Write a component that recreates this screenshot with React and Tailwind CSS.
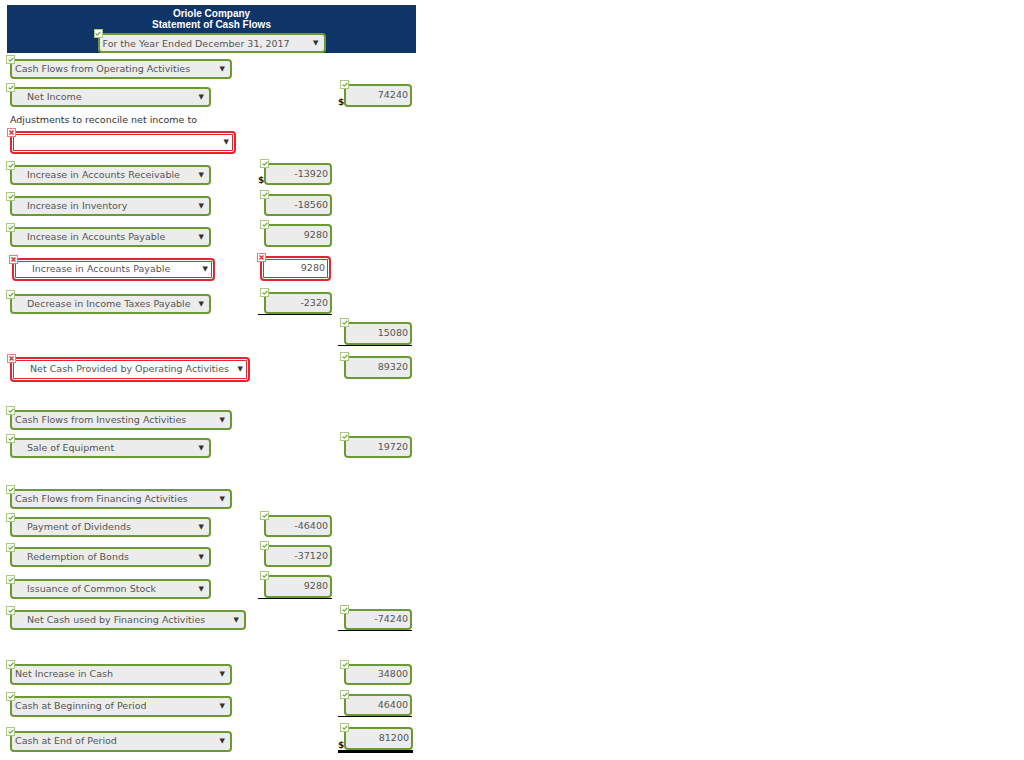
import React from "react";

function Badge({ red, cls = "-left-[6px] -top-[6px]" }) {
  return (
    <span
      className={`absolute ${cls} flex h-[9px] w-[9px] items-center justify-center border bg-white ${
        red ? "border-[#e77b7e]" : "border-[#a9c97f]"
      }`}
    >
      {red ? (
        <svg width="5" height="5" viewBox="0 0 5 5">
          <path d="M0.5 0.5 L4.5 4.5 M4.5 0.5 L0.5 4.5" stroke="#e3262c" strokeWidth="1.3" />
        </svg>
      ) : (
        <svg width="6" height="5" viewBox="0 0 6 5">
          <path d="M0.6 2.6 L2.3 4.1 L5.4 0.8" stroke="#5f9a2a" strokeWidth="1.1" fill="none" />
        </svg>
      )}
    </span>
  );
}

function Sel({ label, cls, indent, red }) {
  let pad = "pl-[3px]";
  if (indent) pad = red ? "pl-[18px]" : "pl-[15px]";
  return (
    <div
      className={`relative flex items-center justify-between rounded-[4px] border-2 pr-[5px] text-[9.5px] ${pad} ${
        red
          ? "border-[#e3262c] bg-white shadow-[inset_0_0_0_1px_#fff,inset_0_0_0_2px_#e3262c]"
          : "border-[#6c9a32] bg-[#ececec]"
      } ${cls}`}
    >
      <Badge red={red} cls={red ? "-left-[5px] -top-[5px]" : "-left-[6px] -top-[6px]"} />
      <span className="whitespace-nowrap text-[#555]">{label}</span>
      <span className="text-[7px] text-[#333]">▼</span>
    </div>
  );
}

function Amt({ value, cls, red }) {
  return (
    <div
      className={`relative flex items-center justify-end rounded-[4px] border-2 pr-[2px] text-[9.5px] text-[#555] ${
        red
          ? "border-[#e3262c] bg-white shadow-[inset_0_0_0_1px_#fff,inset_0_0_0_2px_#e3262c]"
          : "border-[#6c9a32] bg-[#ececec]"
      } ${cls}`}
    >
      <Badge red={red} cls={red ? "-left-[5px] -top-[5px]" : "-left-[6px] -top-[6px]"} />
      {value}
    </div>
  );
}

function Dollar({ show }) {
  return (
    <span className="w-[6px] text-[9px] font-bold leading-[9px] text-[#222]">{show ? "$" : ""}</span>
  );
}

export default function App() {
  return (
    <div className="min-h-[760px] w-[1024px] bg-white font-['DejaVu_Sans',Verdana,sans-serif]">
      {/* header */}
      <div className="ml-[7px] mt-[5px] flex h-[48px] w-[409px] flex-col items-center bg-[#0e3468] pt-[3px] font-['Liberation_Sans',Arial,sans-serif] text-[10px] font-bold leading-[11px] text-white">
        <div>Oriole Company</div>
        <div className="mb-[3px]">Statement of Cash Flows</div>
        <Sel label="For the Year Ended December 31, 2017" cls="w-[228px] h-[20px] font-['DejaVu_Sans',Verdana,sans-serif] font-normal" />
      </div>

      {/* operating */}
      <div className="mt-[6px] flex h-[20px] pl-[10px]">
        <Sel label="Cash Flows from Operating Activities" cls="w-[222px] h-[20px]" />
      </div>

      <div className="mt-[5px] flex h-[23px]">
        <div className="w-[338px] pl-[10px]">
          <Sel label="Net Income" indent cls="w-[201px] h-[20px] mt-[3px]" />
        </div>
        <div className="flex w-[74px] items-end">
          <Dollar show />
          <Amt value="74240" cls="w-[68px] h-[23px]" />
        </div>
      </div>

      <div className="mt-[6px] h-[14px] pl-[10px] text-[9.5px] leading-[14px] text-[#333]">
        Adjustments to reconcile net income to
      </div>

      <div className="mt-[4px] flex h-[23px] pl-[10px]">
        <Sel label="" red cls="w-[226px] h-[23px]" />
      </div>

      <div className="mt-[9px] flex h-[22px]">
        <div className="w-[258px] pl-[10px]">
          <Sel label="Increase in Accounts Receivable" indent cls="w-[201px] h-[20px] mt-[2px]" />
        </div>
        <div className="flex w-[74px] items-end">
          <Dollar show />
          <Amt value="-13920" cls="w-[68px] h-[22px]" />
        </div>
      </div>

      <div className="mt-[9px] flex h-[22px]">
        <div className="w-[258px] pl-[10px]">
          <Sel label="Increase in Inventory" indent cls="w-[201px] h-[20px] mt-[2px]" />
        </div>
        <div className="flex w-[74px] items-end">
          <Dollar />
          <Amt value="-18560" cls="w-[68px] h-[22px]" />
        </div>
      </div>

      <div className="mt-[8px] flex h-[23px]">
        <div className="w-[258px] pl-[10px]">
          <Sel label="Increase in Accounts Payable" indent cls="w-[201px] h-[20px] mt-[3px]" />
        </div>
        <div className="flex w-[74px] items-end">
          <Dollar />
          <Amt value="9280" cls="w-[68px] h-[23px]" />
        </div>
      </div>

      <div className="mt-[9px] flex h-[25px]">
        <div className="w-[260px] pl-[12px]">
          <Sel label="Increase in Accounts Payable" indent red cls="w-[203px] h-[23px] mt-[2px]" />
        </div>
        <div className="flex w-[72px] items-end">
          <Amt value="9280" red cls="w-[71px] h-[25px] pr-[4px]" />
        </div>
      </div>

      <div className="mt-[11px] flex h-[23px]">
        <div className="w-[258px] pl-[10px]">
          <Sel label="Decrease in Income Taxes Payable" indent cls="w-[201px] h-[20px] mt-[2px]" />
        </div>
        <div className="flex h-[23px] w-[74px] items-start border-b border-black">
          <Dollar />
          <Amt value="-2320" cls="w-[68px] h-[22px]" />
        </div>
      </div>

      <div className="mt-[7px] flex h-[24px]">
        <div className="w-[338px]" />
        <div className="flex h-[24px] w-[74px] items-start border-b border-black">
          <Dollar />
          <Amt value="15080" cls="w-[68px] h-[23px]" />
        </div>
      </div>

      <div className="mt-[10px] flex h-[26px]">
        <div className="w-[338px] pl-[10px]">
          <Sel label="Net Cash Provided by Operating Activities" indent red cls="w-[240px] h-[25px] mt-[1px]" />
        </div>
        <div className="flex w-[74px] items-start">
          <Dollar />
          <Amt value="89320" cls="w-[68px] h-[23px]" />
        </div>
      </div>

      {/* investing */}
      <div className="mt-[28px] flex h-[20px] pl-[10px]">
        <Sel label="Cash Flows from Investing Activities" cls="w-[222px] h-[20px]" />
      </div>

      <div className="mt-[6px] flex h-[22px]">
        <div className="w-[338px] pl-[10px]">
          <Sel label="Sale of Equipment" indent cls="w-[201px] h-[20px] mt-[2px]" />
        </div>
        <div className="flex w-[74px] items-start">
          <Dollar />
          <Amt value="19720" cls="w-[68px] h-[22px]" />
        </div>
      </div>

      {/* financing */}
      <div className="mt-[31px] flex h-[20px] pl-[10px]">
        <Sel label="Cash Flows from Financing Activities" cls="w-[222px] h-[20px]" />
      </div>

      <div className="mt-[6px] flex h-[22px]">
        <div className="w-[258px] pl-[10px]">
          <Sel label="Payment of Dividends" indent cls="w-[201px] h-[20px] mt-[2px]" />
        </div>
        <div className="flex w-[74px] items-start">
          <Dollar />
          <Amt value="-46400" cls="w-[68px] h-[22px]" />
        </div>
      </div>

      <div className="mt-[8px] flex h-[22px]">
        <div className="w-[258px] pl-[10px]">
          <Sel label="Redemption of Bonds" indent cls="w-[201px] h-[20px] mt-[2px]" />
        </div>
        <div className="flex w-[74px] items-start">
          <Dollar />
          <Amt value="-37120" cls="w-[68px] h-[22px]" />
        </div>
      </div>

      <div className="mt-[8px] flex h-[24px]">
        <div className="w-[258px] pl-[10px]">
          <Sel label="Issuance of Common Stock" indent cls="w-[201px] h-[20px] mt-[4px]" />
        </div>
        <div className="flex h-[24px] w-[74px] items-start border-b border-black">
          <Dollar />
          <Amt value="9280" cls="w-[68px] h-[23px]" />
        </div>
      </div>

      <div className="mt-[10px] flex h-[22px]">
        <div className="w-[338px] pl-[10px]">
          <Sel label="Net Cash used by Financing Activities" indent cls="w-[236px] h-[20px] mt-[1px]" />
        </div>
        <div className="flex h-[22px] w-[74px] items-start border-b border-black">
          <Dollar />
          <Amt value="-74240" cls="w-[68px] h-[21px]" />
        </div>
      </div>

      {/* totals */}
      <div className="mt-[33px] flex h-[21px]">
        <div className="w-[338px] pl-[10px]">
          <Sel label="Net Increase in Cash" cls="w-[222px] h-[21px]" />
        </div>
        <div className="flex w-[74px] items-start">
          <Dollar />
          <Amt value="34800" cls="w-[68px] h-[21px]" />
        </div>
      </div>

      <div className="mt-[9px] flex h-[23px]">
        <div className="w-[338px] pl-[10px]">
          <Sel label="Cash at Beginning of Period" cls="w-[222px] h-[21px] mt-[2px]" />
        </div>
        <div className="flex h-[23px] w-[74px] items-start border-b border-black">
          <Dollar />
          <Amt value="46400" cls="w-[68px] h-[22px]" />
        </div>
      </div>

      <div className="mt-[10px] flex h-[26px]">
        <div className="w-[338px] pl-[10px]">
          <Sel label="Cash at End of Period" cls="w-[222px] h-[21px] mt-[4px]" />
        </div>
        <div className="flex h-[26px] w-[75px] items-start border-b-[3px] border-black">
          <div className="flex h-[23px] items-end">
            <Dollar show />
          </div>
          <Amt value="81200" cls="w-[69px] h-[23px]" />
        </div>
      </div>
    </div>
  );
}
